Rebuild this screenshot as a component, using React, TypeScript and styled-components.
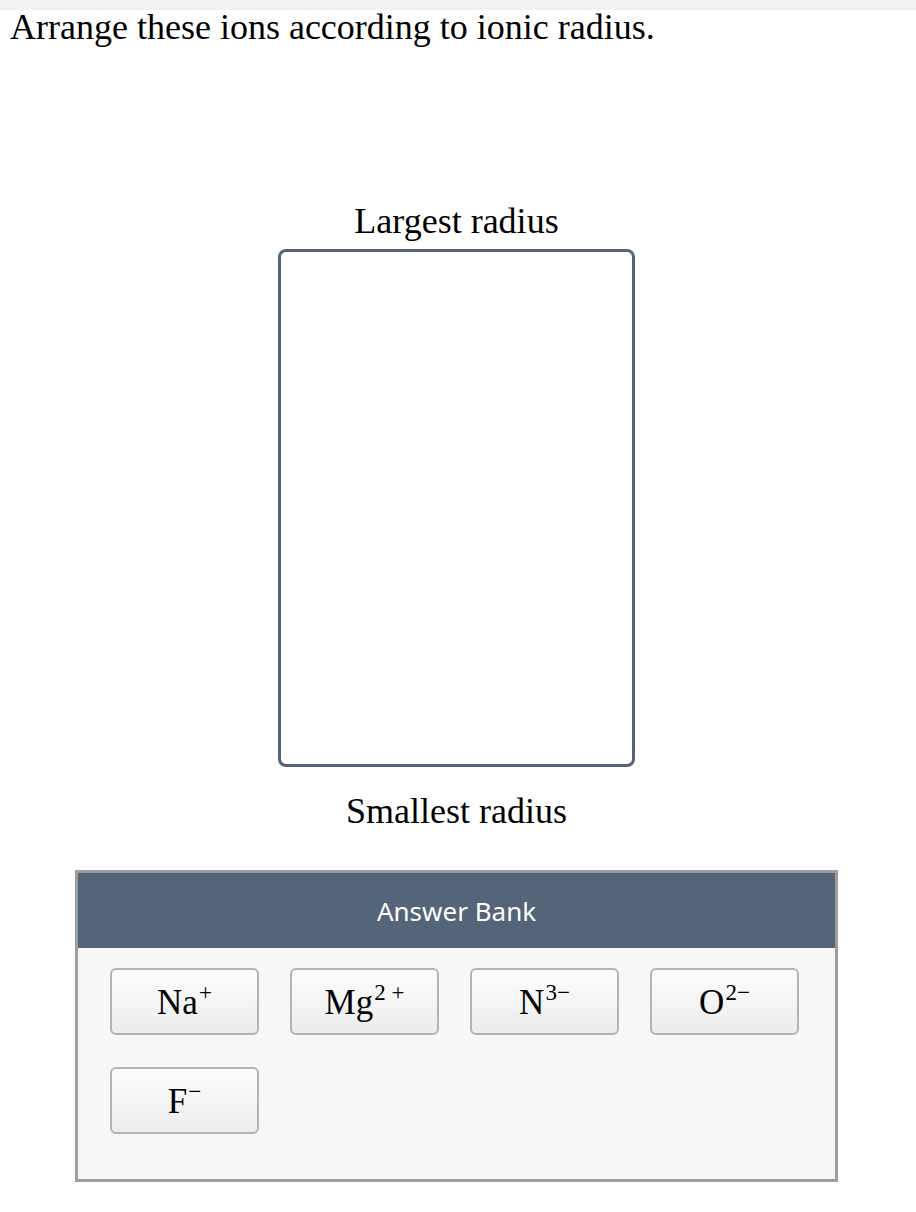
import React from 'react';
import styled, { createGlobalStyle } from 'styled-components';

const GlobalStyle = createGlobalStyle`
  html, body {
    margin: 0;
    padding: 0;
    background: #fff;
  }
  body {
    font-family: "Liberation Serif", "Times New Roman", serif;
    color: #000;
  }
`;

const IONS: { symbol: string; charge: string }[] = [
  { symbol: 'Na', charge: '+' },
  { symbol: 'Mg', charge: '2 +' },
  { symbol: 'N', charge: '3\u2212' },
  { symbol: 'O', charge: '2\u2212' },
  { symbol: 'F', charge: '\u2212' },
];

const App = () => {
  return (
    <>
      <GlobalStyle />
      <TopStrip />
      <Prompt>Arrange these ions according to ionic radius.</Prompt>
      <Stage>
        <RankLabel $top>Largest radius</RankLabel>
        <DropZone />
        <RankLabel>Smallest radius</RankLabel>
        <Bank>
          <BankHeader>Answer Bank</BankHeader>
          <BankBody>
            {IONS.map(ion => (
              <Chip key={ion.symbol}>
                <Formula>
                  {ion.symbol}
                  <Charge>{ion.charge}</Charge>
                </Formula>
              </Chip>
            ))}
          </BankBody>
        </Bank>
      </Stage>
    </>
  );
};

export default App;

const TopStrip = styled.div`
  height: 10px;
  background: #f2f2f2;
`;

const Prompt = styled.div`
  padding-left: 10px;
  font-size: 36px;
  line-height: 35px;
`;

const Stage = styled.main`
  width: 913px;
  padding-top: 156px;
  padding-bottom: 30px;

  display: flex;
  flex-direction: column;
  align-items: center;
`;

const RankLabel = styled.div<{ $top?: boolean }>`
  font-size: 36px;
  line-height: 40px;
  margin: ${({ $top }) => ($top ? '0 0 8px' : '24px 0 39px')};
`;

const DropZone = styled.div`
  box-sizing: border-box;
  width: 357px;
  height: 518px;
  border: 3px solid #546479;
  border-radius: 8px;
  background: #fff;
`;

const Bank = styled.section`
  box-sizing: border-box;
  width: 763px;
  height: 312px;
  border: 3px solid #9e9e9e;
  background: #f7f7f7;
`;

const BankHeader = styled.div`
  height: 75px;
  background: #546479;
  color: #fff;

  display: flex;
  align-items: center;
  justify-content: center;

  font-family: "Noto Sans", "Open Sans", sans-serif;
  font-size: 26px;
`;

const BankBody = styled.div`
  padding: 20px 32px;

  display: grid;
  grid-template-columns: repeat(4, 149px);
  grid-auto-rows: 67px;
  column-gap: 31px;
  row-gap: 32px;
`;

const Chip = styled.div`
  box-sizing: border-box;
  border: 2px solid #b3b3b3;
  border-radius: 6px;
  background: linear-gradient(#fdfdfd, #ececec);

  display: flex;
  align-items: center;
  justify-content: center;
`;

const Formula = styled.span`
  font-size: 35px;
  line-height: 1;
  padding-top: 2px;
`;

const Charge = styled.sup`
  font-size: 23px;
  line-height: 0;
  vertical-align: 14px;
  margin-left: 1px;
  white-space: pre;
`;
